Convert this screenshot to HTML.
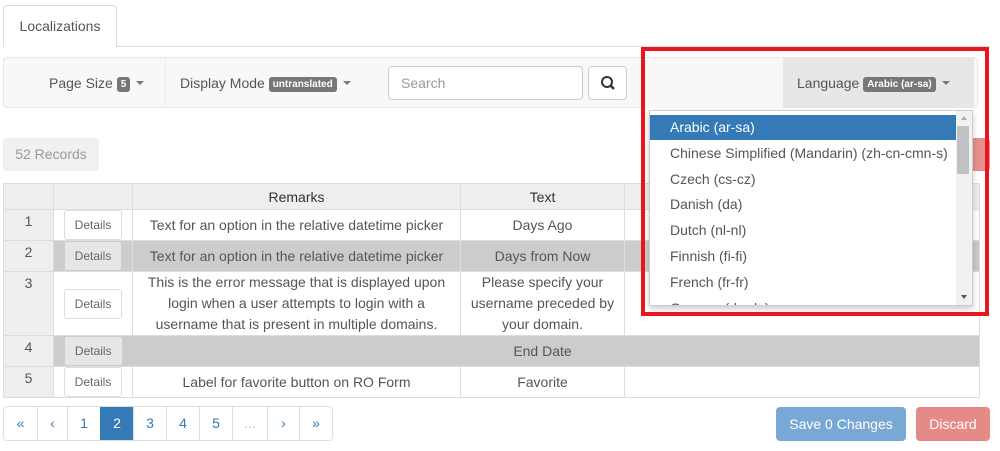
<!DOCTYPE html>
<html><head><style>
*{box-sizing:border-box}
body{margin:0;width:1000px;height:451px;background:#fff;font-family:"Liberation Sans",sans-serif;font-size:14px;color:#555;position:relative;overflow:hidden}
.a{position:absolute}
.tab{left:3px;top:5px;width:114px;height:42px;border:1px solid #ddd;border-bottom:none;border-radius:4px 4px 0 0;background:#fff;text-align:center;line-height:40px;color:#555}
.tabline{left:117px;top:46px;width:873px;height:1px;background:#ddd}
.bar{left:3px;top:57px;width:975px;height:51px;background:#f8f8f8;border:1px solid #e7e7e7;border-radius:4px}
.badge{display:inline-block;background:#777;color:#fff;font-size:10px;font-weight:bold;padding:2px 4px;border-radius:3px;vertical-align:1px}
.caret{display:inline-block;width:0;height:0;border-left:4px solid transparent;border-right:4px solid transparent;border-top:4px solid #777;vertical-align:3px;margin-left:6px}
table{border-collapse:collapse;position:absolute;left:3px;top:183px;width:977px;font-size:14px}
td,th{border:1px solid #ddd;text-align:center;padding:0 6px;font-weight:normal;color:#555}
th{background:#eee;height:26px;color:#333}
td.n{background:#eee;vertical-align:top;padding-top:3px;width:50px}
.det{display:inline-block;border:1px solid #ddd;border-radius:3px;background:#fff;font-size:12px;padding:7px 10px;color:#666}
tr.g td{background:#ccc}
tr.g td.n{background:#eee}
tr.g .det{background:#e6e6e6;border-color:#ccc}
.pg{left:3px;top:406px;height:35px;display:flex;border:1px solid #ddd;border-radius:4px;overflow:hidden}
.pg span{border-left:1px solid #ddd;line-height:33px;text-align:center;color:#337ab7;font-size:14px}
.pg span:first-child{border-left:none}
</style></head><body>
<div class="a tab">Localizations</div>
<div class="a tabline"></div>
<div class="a bar"></div>
<div class="a" style="left:165px;top:58px;width:1px;height:49px;background:#eee"></div>
<div class="a" style="left:49px;top:75px;color:#555">Page Size <span class="badge">5</span><span class="caret"></span></div>
<div class="a" style="left:180px;top:75px;color:#555">Display Mode <span class="badge">untranslated</span><span class="caret"></span></div>
<div class="a" style="left:388px;top:66px;width:195px;height:34px;border:1px solid #ccc;border-radius:4px;background:#fff;padding:8px 12px;color:#999">Search</div>
<div class="a" style="left:588px;top:66px;width:39px;height:34px;border:1px solid #ccc;border-radius:4px;background:#fff">
<svg width="39" height="34" viewBox="0 0 39 34"><circle cx="18" cy="15" r="5" fill="none" stroke="#333" stroke-width="2"/><line x1="21.5" y1="18.5" x2="25" y2="22" stroke="#333" stroke-width="2.5"/></svg></div>
<div class="a" style="left:3px;top:138px;width:96px;height:33px;background:#f0f0f0;border-radius:4px;color:#999;line-height:33px;text-align:center">52 Records</div>
<div class="a" style="left:960px;top:138px;width:30px;height:33px;background:#d9534f;opacity:.65;border-radius:4px"></div>
<table>
<tr><th></th><th style="width:79px"></th><th style="width:328px">Remarks</th><th style="width:164px">Text</th><th></th></tr>
<tr style="height:31px"><td class="n">1</td><td><span class="det">Details</span></td><td>Text for an option in the relative datetime picker</td><td>Days Ago</td><td></td></tr>
<tr class="g" style="height:31px"><td class="n">2</td><td><span class="det">Details</span></td><td>Text for an option in the relative datetime picker</td><td>Days from Now</td><td></td></tr>
<tr style="height:63px"><td class="n">3</td><td><span class="det">Details</span></td><td style="line-height:21px">This is the error message that is displayed upon login when a user attempts to login with a username that is present in multiple domains.</td><td style="line-height:21px">Please specify your username preceded by your domain.</td><td></td></tr>
<tr class="g" style="height:31px"><td class="n">4</td><td style="border-right:none"><span class="det">Details</span></td><td style="border-left:none;border-right:none"></td><td style="border-left:none;border-right:none">End Date</td><td style="border-left:none"></td></tr>
<tr style="height:31px"><td class="n">5</td><td><span class="det">Details</span></td><td>Label for favorite button on RO Form</td><td>Favorite</td><td></td></tr>
</table>
<div class="a pg">
<span style="width:33px">«</span><span style="width:30px">‹</span><span style="width:33px">1</span><span style="width:33px;background:#337ab7;color:#fff;border-color:#337ab7">2</span><span style="width:33px">3</span><span style="width:33px">4</span><span style="width:33px">5</span><span style="width:35px;color:#bbb">...</span><span style="width:32px">›</span><span style="width:33px">»</span>
</div>
<div class="a" style="left:776px;top:407px;width:130px;height:34px;background:#7aa8d4;border-radius:4px;color:#fff;line-height:34px;text-align:center">Save 0 Changes</div>
<div class="a" style="left:916px;top:407px;width:74px;height:34px;background:#e68a88;border-radius:4px;color:#fff;line-height:34px;text-align:center">Discard</div>

<div class="a" style="left:644px;top:58px;width:330px;height:50px;background:#f8f8f8"></div>
<div class="a" style="left:783px;top:58px;width:191px;height:50px;background:#e7e7e7"></div>
<div class="a" style="left:797px;top:75px;color:#555">Language <span class="badge">Arabic (ar-sa)</span><span class="caret"></span></div>
<div class="a" style="left:649px;top:110px;width:324px;height:196px;background:#fff;border:1px solid #ccc;box-shadow:0 3px 6px rgba(0,0,0,.2);overflow:hidden">
<div style="position:absolute;left:0;top:4px;width:306px;height:25px;background:#337ab7"></div>
<div style="position:absolute;left:20px;top:0;font-size:14px;line-height:25.8px;color:#555;padding-top:4px">
<div style="color:#fff">Arabic (ar-sa)</div><div>Chinese Simplified (Mandarin) (zh-cn-cmn-s)</div><div>Czech (cs-cz)</div><div>Danish (da)</div><div>Dutch (nl-nl)</div><div>Finnish (fi-fi)</div><div>French (fr-fr)</div><div>German (de-de)</div></div>
<div style="position:absolute;right:0;top:0;width:16px;height:196px;background:#f1f1f1"></div>
<div style="position:absolute;right:3px;top:15px;width:12px;height:48px;background:#c1c1c1"></div>
<div style="position:absolute;right:5px;top:5px;border-left:3px solid transparent;border-right:3px solid transparent;border-bottom:4px solid #aaa"></div>
<div style="position:absolute;right:5px;bottom:6px;border-left:3px solid transparent;border-right:3px solid transparent;border-top:4px solid #555"></div>
</div>
<div class="a" style="left:641px;top:47px;width:348px;height:269px;border:4px solid #e8141e"></div>
</body></html>
